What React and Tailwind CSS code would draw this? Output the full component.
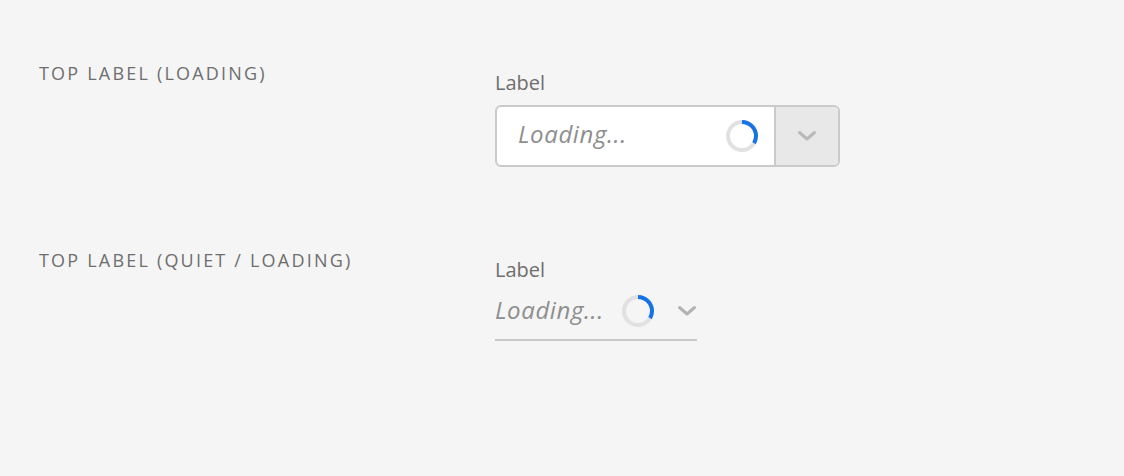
import React from "react";

function Spinner() {
  const r = 14;
  const c = 2 * Math.PI * r;
  return (
    <svg width="32" height="32" viewBox="0 0 32 32" className="shrink-0">
      <circle cx="16" cy="16" r={r} fill="none" stroke="#e1e1e1" strokeWidth="4" />
      <circle
        cx="16"
        cy="16"
        r={r}
        fill="none"
        stroke="#1473e6"
        strokeWidth="4"
        strokeDasharray={`${c / 3} ${c}`}
        transform="rotate(-90 16 16)"
      />
    </svg>
  );
}

function Chevron({ color = "#b9b9b9" }) {
  return (
    <svg width="20" height="12" viewBox="0 0 20 12" className="shrink-0">
      <polyline
        points="2.5,2.5 10,9 17.5,2.5"
        fill="none"
        stroke={color}
        strokeWidth="3"
        strokeLinecap="round"
        strokeLinejoin="round"
      />
    </svg>
  );
}

function Heading({ children }) {
  return (
    <div className="w-[456px] shrink-0 text-[18px] leading-[24px] tracking-[2.2px] text-[#6e6e6e] uppercase">
      {children}
    </div>
  );
}

function FieldLabel() {
  return <div className="text-[20px] leading-[24px] text-[#6e6e6e]">Label</div>;
}

export default function App() {
  return (
    <div
      className="min-h-screen bg-[#f5f5f5] pl-[39px] pt-[61px]"
      style={{ fontFamily: '"Open Sans", "Liberation Sans", sans-serif' }}
    >
      {/* standard picker */}
      <div className="flex items-start">
        <Heading>Top label (loading)</Heading>
        <div className="pt-[10px]">
          <FieldLabel />
          <div className="mt-[10px] flex h-[62px] w-[345px] rounded-[6px] border-2 border-[#cacaca] bg-white">
            <div className="flex flex-1 items-center pl-[21px] pr-[16px]">
              <span className="mb-[5px] flex-1 text-[24px] italic leading-[32px] tracking-[0.6px] text-[#8e8e8e]">
                Loading...
              </span>
              <Spinner />
            </div>
            <div className="flex w-[64px] items-center justify-center rounded-r-[4px] border-l-2 border-[#cacaca] bg-[#e8e8e8]">
              <Chevron />
            </div>
          </div>
        </div>
      </div>

      {/* quiet picker */}
      <div className="mt-[81px] flex items-start">
        <Heading>Top label (quiet / loading)</Heading>
        <div className="pt-[10px]">
          <FieldLabel />
          <div className="flex h-[59px] w-[202px] items-center border-b-2 border-[#cacaca]">
            <span className="mb-[2px] text-[24px] italic leading-[32px] tracking-[0.6px] text-[#8e8e8e]">
              Loading...
            </span>
            <div className="ml-[18px]">
              <Spinner />
            </div>
            <div className="ml-auto">
              <Chevron color="#b3b3b3" />
            </div>
          </div>
        </div>
      </div>
    </div>
  );
}
